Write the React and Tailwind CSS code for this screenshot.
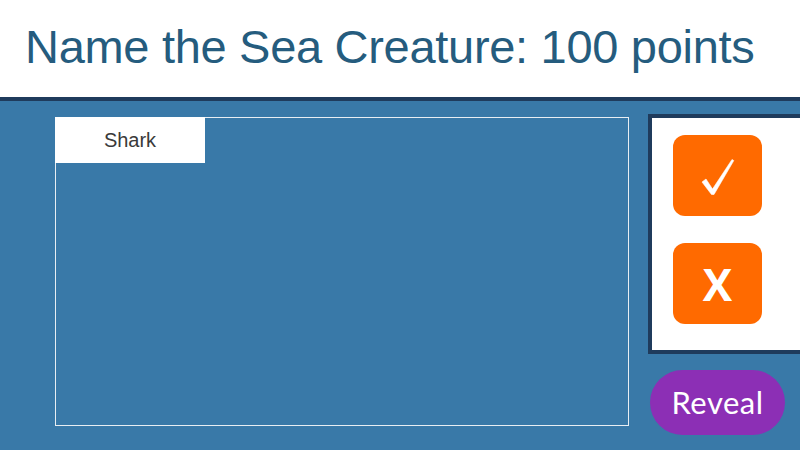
export default function App() {
  return (
    <div className="w-[800px] h-[450px] overflow-hidden bg-[#3979a8] flex flex-col" style={{ fontFamily: '"Liberation Sans", Arial, sans-serif' }}>
      <div className="h-[101px] shrink-0 bg-white border-b-[4px] border-[#1f3b5c] flex items-center pl-[25px] pb-[4px]">
        <h1 className="text-[47px] leading-none text-[#255c7e] tracking-[-0.3px]" style={{ fontFamily: '"Liberation Sans", Arial, sans-serif' }}>
          Name the Sea Creature: 100 points
        </h1>
      </div>
      <div className="flex flex-1">
        <div className="shrink-0 ml-[55px] mt-[16px] w-[574px] h-[309px] border border-[#e8eef3] relative">
          <div className="w-[150px] h-[46px] bg-white flex items-center justify-center text-[20px] text-[#3a3a3a] -ml-px -mt-px">
            Shark
          </div>
        </div>
        <div className="shrink-0 ml-[19px] flex flex-col">
          <div className="mt-[13px] w-[160px] h-[240px] bg-white border-[4px] border-r-0 border-[#1f3b5c] pl-[21px] pt-[17px] flex flex-col gap-[27px]">
            <div className="w-[89px] h-[81px] rounded-[12px] bg-[#ff6a00] flex items-center justify-center text-white leading-none">
              <svg width="34" height="38" viewBox="0 0 34 38" fill="none" className="mt-[2px]">
                <path d="M1 24 L5 21 L11.5 31 L31 1.5 L32.8 2.6 L13 36.5 L10.5 36.5 Z" fill="white" strokeLinejoin="round" stroke="white" strokeWidth="0.6" />
              </svg>
            </div>
            <div className="w-[89px] h-[81px] rounded-[12px] bg-[#ff6a00] flex items-center justify-center text-white text-[44px] font-bold leading-none" style={{ fontFamily: '"Open Sans", sans-serif' }}>
              X
            </div>
          </div>
          <div className="mt-[16px] ml-[2px] w-[135px] h-[65px] rounded-full bg-[#8c2fb5] flex items-center justify-center text-white text-[31px] tracking-[0.5px]" style={{ fontFamily: 'Lato, sans-serif' }}>
            Reveal
          </div>
        </div>
      </div>
    </div>
  );
}
